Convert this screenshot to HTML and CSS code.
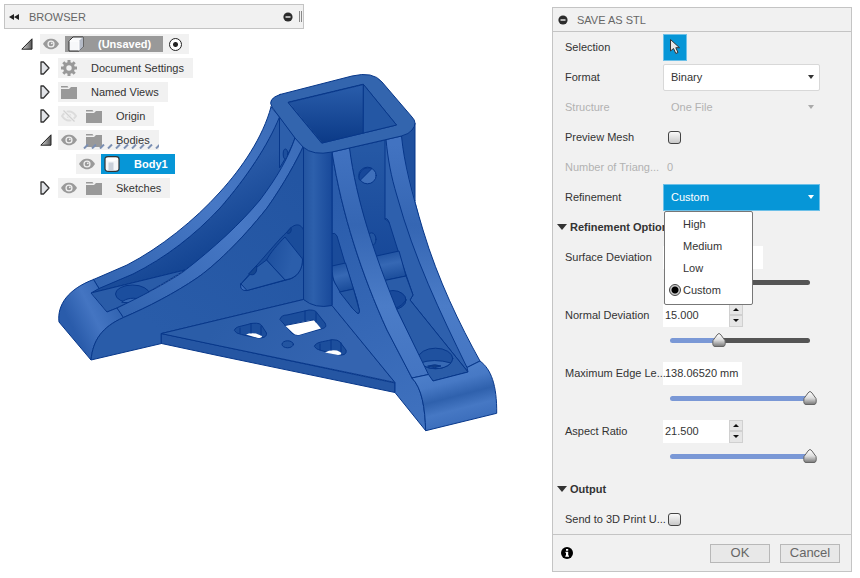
FILE: index.html
```html
<!DOCTYPE html>
<html lang="en">
<head>
<meta charset="utf-8">
<title>Save As STL</title>
<link rel="stylesheet" href="styles.css">
</head>
<body>
<svg class="defs" width="0" height="0" aria-hidden="true">
  <symbol id="eye" viewBox="0 0 16 12">
    <path d="M0 6C2.500 2 5 .8 8 .8S13.500 2 16 6C13.500 10 11 11.200 8 11.200S2.500 10 0 6Z" fill="#9a9a9a"/>
    <circle cx="8" cy="6" r="3.600" fill="#f1f1f1"/><circle cx="8" cy="6" r="2.300" fill="#9a9a9a"/>
    <circle cx="8.800" cy="5.300" r=".9" fill="#f1f1f1"/>
  </symbol>
  <symbol id="eye-off" viewBox="0 0 16 12">
    <path d="M1 6C3 3 5.500 1.500 8 1.500S13 3 15 6C13 9 10.500 10.500 8 10.500S3 9 1 6Z" fill="none" stroke="#dcdcdc" stroke-width="2"/>
    <circle cx="8" cy="6" r="2.300" fill="#dcdcdc"/>
    <path d="M2 0L14 12" stroke="#f1f1f1" stroke-width="3"/><path d="M2.500 .5L13.500 11.500" stroke="#d2d2d2" stroke-width="1.300"/>
  </symbol>
  <symbol id="folder" viewBox="0 0 16 13">
    <path d="M0 0H6.500L7.500 1.500H0ZM0 3H8L10 1H16V13H0Z" fill="#999"/>
  </symbol>
  <symbol id="closed" viewBox="0 0 10 14">
    <path d="M1 1H3.500L9 7L3.500 13H1Z" fill="#e2e4e8" stroke="#333" stroke-width="1.300" stroke-linejoin="round"/>
  </symbol>
  <symbol id="open" viewBox="0 0 12 12">
    <path d="M11 .8V11.200H.8Z" fill="url(#tri)" stroke="#222"/>
  </symbol>
  <symbol id="minus" viewBox="0 0 10 10">
    <circle cx="5" cy="5" r="4.600" fill="#2b2b2b"/><path d="M2.500 5H7.500" stroke="#f1f1f1" stroke-width="1.400"/>
  </symbol>
  <linearGradient id="tri" x1="0" x2="1"><stop offset="0" stop-color="#ddd"/><stop offset="1" stop-color="#555"/></linearGradient>
</svg>

<svg class="model" viewBox="55 70 446 366" role="img" aria-label="Post base bracket">
  <defs>
    <linearGradient id="toe" gradientUnits="userSpaceOnUse" x1="64" y1="310" x2="112" y2="286">
      <stop offset="0" stop-color="#2a5cab"/><stop offset=".45" stop-color="#4475c2"/><stop offset="1" stop-color="#2f61ae"/>
    </linearGradient>
    <linearGradient id="toe2" gradientUnits="userSpaceOnUse" x1="445" y1="368" x2="460" y2="426">
      <stop offset="0" stop-color="#4d7fca"/><stop offset=".25" stop-color="#4779c5"/><stop offset=".5" stop-color="#2f61ad"/><stop offset=".72" stop-color="#4678c4"/><stop offset="1" stop-color="#3a6cba"/>
    </linearGradient>
    <linearGradient id="strip" gradientUnits="userSpaceOnUse" x1="280" y1="130" x2="110" y2="310">
      <stop offset="0" stop-color="#3c6db9"/><stop offset=".4" stop-color="#4778c5"/><stop offset="1" stop-color="#3163af"/>
    </linearGradient>
    <linearGradient id="stripv" gradientUnits="userSpaceOnUse" x1="0" y1="145" x2="0" y2="375">
      <stop offset="0" stop-color="#4273c1"/><stop offset=".35" stop-color="#3566b3"/><stop offset=".7" stop-color="#4b7cc7"/><stop offset="1" stop-color="#4475c2"/>
    </linearGradient>
    <linearGradient id="post" x1="0" x2="1">
      <stop offset="0" stop-color="#2354a0"/><stop offset=".35" stop-color="#2d60ac"/><stop offset="1" stop-color="#18499a"/>
    </linearGradient>
    <linearGradient id="well" x1="0" y1="0" x2="0" y2="1">
      <stop offset="0" stop-color="#2a5dab"/><stop offset="1" stop-color="#0b3a87"/>
    </linearGradient>
    <linearGradient id="wall" gradientUnits="userSpaceOnUse" x1="220" y1="180" x2="250" y2="235">
      <stop offset="0" stop-color="#2859a6"/><stop offset="1" stop-color="#134492"/>
    </linearGradient>
    <linearGradient id="side" gradientUnits="userSpaceOnUse" x1="300" y1="180" x2="170" y2="340">
      <stop offset="0" stop-color="#2355a2"/><stop offset="1" stop-color="#295ca9"/>
    </linearGradient>
    <linearGradient id="inner" gradientUnits="userSpaceOnUse" x1="0" y1="150" x2="0" y2="260">
      <stop offset="0" stop-color="#2558a5"/><stop offset="1" stop-color="#174899"/>
    </linearGradient>
    <linearGradient id="arm" gradientUnits="userSpaceOnUse" x1="335" y1="200" x2="420" y2="420">
      <stop offset="0" stop-color="#2a5cab"/><stop offset="1" stop-color="#3f71be"/>
    </linearGradient>
    <linearGradient id="band" x1="0" y1="0" x2=".2" y2="1">
      <stop offset="0" stop-color="#1b4d9c"/><stop offset=".5" stop-color="#3668b4"/><stop offset="1" stop-color="#1c4e9c"/>
    </linearGradient>
    <linearGradient id="bore" x1="0" y1="0" x2="1" y2=".3">
      <stop offset="0" stop-color="#1b4d9c"/><stop offset=".8" stop-color="#2b5eab"/>
    </linearGradient>
    <linearGradient id="plate" gradientUnits="userSpaceOnUse" x1="240" y1="300" x2="320" y2="370">
      <stop offset="0" stop-color="#2b5da8"/><stop offset="1" stop-color="#3464b0"/>
    </linearGradient>
  </defs>
  <g stroke="#07378a" stroke-width="1" stroke-linejoin="round" stroke-linecap="round">
    <!-- far wall of the left arm -->
    <path fill="url(#wall)" d="M279 117C268 145 247 177 220 208C195 235 165 258 133 274L99 288L91 293L185 270C230 240 280 190 295 138Z"/>
    <path fill="#2d5fab" d="M279.500 117V168C287 156 292 147 295 138Z"/>
    <ellipse cx="285.500" cy="154" rx="2.300" ry="5" fill="#1d4f9d"/>
    <!-- left arm floor -->
    <path fill="#2a5ca8" d="M91 293L185 270C165 283 140 297 117 308L107 312Z"/>
    <ellipse cx="132.500" cy="294" rx="17" ry="9" fill="#1b4e9e"/>
    <path fill="#3466b2" d="M122 302C126 298 134 297 143 300L132 303Z"/>
    <!-- left arm top strips and toe -->
    <path fill="url(#strip)" d="M271 107L279.500 117C268 145 247 177 220 208C195 235 165 258 133 274L99 288.500L93.500 279.500L127 265C160 248 195 220 220 192C242 168 263 137 271 107Z"/>
    <path fill="url(#toe)" d="M93.500 279.500L99 288.500L91 293L107 312L117 308L123.500 317.500C102 327 93 340 91 360L59 322C57 305 68 289 93.500 279.500Z"/>
    <path fill="url(#strip)" d="M295 138L303.500 146C297 160 284 184 267 208C240 242 213 267 197 278C175 293 148 307 123.500 317.500L117 308C140 297 165 284 183 272C215 247 240 224 260 200C278 176 288 158 295 138Z"/>
    <!-- left arm near side -->
    <path fill="url(#side)" d="M303.500 146V299.500L161.500 333.500V343.500L91 360C93 340 102 327 123.500 317.500C148 307 175 293 197 278C213 267 240 242 267 208C284 184 297 160 303.500 146Z"/>
    <path fill="#1a4c9a" d="M241 284L257 265C267 254 280 238 287 232C293 224 300 222 303.500 230V256C302 270 298 276 290 279L247 290.500C241 290 240 287 241 284Z"/>
    <path fill="url(#bore)" d="M266.500 260L285 280L291 278.500C299 275 302.500 268 302.500 259L285 237C278 244 270 253 266.500 260Z"/>
    <path fill="#2a5da9" d="M241 284L257 267L266.500 260L285 280L247 290.500Z"/>
    <path fill="#14458f" d="M249 274C254 277 258 272 256.500 266ZM287 233C290 235 292 231 291 228Z"/>
    <path fill="#3b6dba" d="M241 284L247 290.500C241 291 240 287 241 284Z"/>
    <!-- base plate -->
    <path fill="#2556a3" d="M161.500 333.500L395 383V392.500L220 356L161.500 343.500Z"/>
    <path fill="url(#plate)" d="M161.500 333.500L303.500 299.500L332 305.500L395 382.500L360 375L220 346Z"/>
    <path fill="#1c4e9c" d="M280 319C281 316 284 315 287 315L309 310C314 310 316 311 317 313L325 323C327 327 325 328 321 329L299 335C294 335 292 334 290 331Z"/>
    <path fill="#fff" stroke="none" d="M285 325.500L311 320Q314 319.500 315.500 322L321 328.500L299 335Q295 335.500 293 333Z"/>
    <path fill="none" d="M285 325.500L313 320M305 311V321M316 312V322"/>
    <path fill="#1c4e9c" d="M234.500 330C236 326 240 327 251 323.500C257 323 260 323 262 326L266.500 333C267 337 263 338 259 338C252 337 242 335 237 333Z"/>
    <path fill="#fff" stroke="none" d="M246 334.500Q250 332.500 256 333.500L262 336Q262 338 258 338Z"/>
    <path fill="none" d="M240 328V333M251 323.500V333M261 326V335"/>
    <path fill="#1c4e9c" d="M314.500 346C316 342 322 342 332 339.700Q338 339.500 340 342L346 350C347 354 344 355 340 355C330 353 322 351 317 349Z"/>
    <path fill="#fff" stroke="none" d="M325 352.500Q330 349.500 337 350.500L341 352.500Q342 355 338 355Z"/>
    <path fill="none" d="M320 344V350M331 340V350M341 343V352"/>
    <ellipse cx="287.700" cy="344.300" rx="5.700" ry="3.500" fill="#2355a1"/>
    <!-- outer column of the post -->
    <path fill="#1f509e" d="M400 136L415 123V201L408 190Z"/>
    <!-- right arm outer wall -->
    <path fill="#2e60ad" stroke="none" d="M385 140H400L425 240L474 366L467.500 371L433 380L384 225Z"/>
    <!-- post face between the arm's strips -->
    <path fill="url(#inner)" d="M349 148L385 140V219L389 222L400 257L413 295L410 300L468 372L433 381L428 375L397 310C380 270 360 220 349 148Z"/>
    <path fill="none" d="M385 219Q387 217 389 222"/>
    <path fill="url(#band)" d="M376.500 256L399 251L406 276L384.500 280.500Z"/>
    <ellipse cx="367.500" cy="175.500" rx="8.700" ry="8.300" fill="#3f70bb"/>
    <path fill="#17489a" d="M359 179C358 170 366 166 372 168.500L360.500 180Z"/>
    <ellipse cx="371.500" cy="239.300" rx="4.500" ry="6.500" fill="#2355a1"/>
    <path fill="#2a5ca8" d="M384.500 280.500L406 276L413 295L410 300L468 372L433 381L428 375L397 310Z"/>
    <ellipse cx="393" cy="300" rx="13" ry="9.500" fill="#18499a"/>
    <path fill="none" d="M396 308Q402 306 406 300"/>
    <ellipse cx="435.500" cy="358.500" rx="17.300" ry="10.300" fill="#1f519f"/>
    <path fill="#3769b4" d="M420 363Q434 358 451 363Q445 369 435 368.500Q425 368 420 363Z"/>
    <path fill="#123f88" d="M428 366Q435 363.500 441 366L435 367.500Z"/>
    <path fill="url(#stripv)" d="M386 139.500L401.500 136C404 163 412 193 423 230C438 280 460 325 480 361L467 367.500C440 312 414 258 397 196C391 176 388 160 386 139.500Z"/>
    <!-- right arm near side -->
    <path fill="url(#arm)" d="M332 152V305.500L395 382.500V392.500L425.700 430.700C425 408 422 388 412 378L387 330C362 275 342 215 332 152Z"/>
    <path fill="#1a4b9a" d="M332 233.500Q335 232 337 236L345 263L357 300L359.500 311Q359 315 357 313L353 309L335 283Q332 278 332 272Z"/>
    <path fill="url(#band)" d="M332 266L345.500 263L353.500 289L340 292L335 283Q332 278 332 266Z"/>
    <path fill="#2456a3" d="M340 292L353.500 289L359.500 311Q359 315 357 313L353 309Z"/>
    <path fill="url(#stripv)" d="M332 152L349.500 148C356 200 375 256 397 310L428.500 374.500L412 378L387 330C362 275 342 215 332 152Z"/>
    <path fill="url(#toe2)" d="M412 378L428.500 374.500L433 381L468 372L467 367.500L480 361C491 369 497 385 496.700 413.300L425.700 430.700C425 408 422 388 412 378Z"/>
    <!-- post corner and top ring -->
    <path fill="url(#post)" d="M303.500 146V299.500Q315 309 332 305.500V152Z"/>
    <path fill="#3365ae" fill-rule="evenodd" d="M280 94.500L352 76Q373 71 382 82L412 117Q418 123 412 130Q409 134 401.500 136L332 152Q313 156 303 147L295 138L272 107Q267 99 280 94.500ZM288.500 102.500L322 143L396.500 125L363.500 84.500Z"/>
    <path fill="url(#well)" d="M288.500 102.500L363.500 84.500V133L322 143Z"/>
    <path fill="#2457a4" d="M363.500 84.500L396.500 125L363.500 133Z"/>
  </g>
</svg>

<main class="workspace">
  <aside class="browser">
    <header class="browser-bar">
      <svg class="rewind" viewBox="0 0 10 6" aria-hidden="true"><path d="M5 0V6L0 3ZM10 0V6L5 3Z" fill="#222"/></svg>
      <h2>BROWSER</h2>
      <svg class="i10" aria-hidden="true"><use href="#minus"/></svg>
      <i class="grip"></i>
    </header>
    <ul class="tree">
      <li class="root"><button class="toggle" aria-label="Collapse"><svg class="i12"><use href="#open"/></svg></button>
        <div class="chip"><svg class="eye"><use href="#eye"/></svg><span class="tag doc"><svg class="i16" viewBox="0 0 16 16"><path d="M1 5L5 1H15V11L11 15H1Z" fill="#f7f8fa" stroke="#333" stroke-linejoin="round"/><path d="M11 5L15 1V11L11 15Z" fill="#b4bac6"/><path d="M1.500 5H11V14.500" fill="none" stroke="#fff"/></svg>(Unsaved)</span><input class="activate" type="radio" name="active" checked aria-label="Activate component"></div></li>
      <li><button class="toggle" aria-label="Expand"><svg class="tri"><use href="#closed"/></svg></button>
        <div class="chip"><svg class="i16" viewBox="0 0 16 16"><circle cx="8" cy="8" r="4.300" fill="none" stroke="#999" stroke-width="3.200"/><path d="M8 0V3M8 13V16M0 8H3M13 8H16M2.300 2.300L4.500 4.500M11.500 11.500L13.700 13.700M2.300 13.700L4.500 11.500M11.500 4.500L13.700 2.300" stroke="#999" stroke-width="3"/></svg><span>Document Settings</span></div></li>
      <li><button class="toggle" aria-label="Expand"><svg class="tri"><use href="#closed"/></svg></button>
        <div class="chip"><svg class="folder"><use href="#folder"/></svg><span>Named Views</span></div></li>
      <li><button class="toggle" aria-label="Expand"><svg class="tri"><use href="#closed"/></svg></button>
        <div class="chip"><svg class="eye"><use href="#eye-off"/></svg><svg class="folder"><use href="#folder"/></svg><span>Origin</span></div></li>
      <li><button class="toggle" aria-label="Collapse"><svg class="i12"><use href="#open"/></svg></button>
        <div class="chip hatched"><svg class="eye"><use href="#eye"/></svg><svg class="folder"><use href="#folder"/></svg><span>Bodies</span></div></li>
      <li class="leaf">
        <div class="chip"><svg class="eye"><use href="#eye"/></svg><span class="tag body"><svg class="i16" viewBox="0 0 16 16"><path d="M1 3Q1 .7 4 .7H12Q15 .7 15 3V12.500Q15 15.300 11.500 15.300H4.500Q1 15.300 1 12.500Z" fill="#f4f6f8" stroke="#333" stroke-width="1.200"/><path d="M4.500 6.500H9.500V14.500H4.500Z" fill="#c9d0da"/><path d="M2 3.500Q8 7 14 3.500V2H2Z" fill="#fff"/></svg>Body1</span></div></li>
      <li><button class="toggle" aria-label="Expand"><svg class="tri"><use href="#closed"/></svg></button>
        <div class="chip"><svg class="eye"><use href="#eye"/></svg><svg class="folder"><use href="#folder"/></svg><span>Sketches</span></div></li>
    </ul>
  </aside>

  <form class="dialog">
    <header class="dialog-bar">
      <svg class="i10" aria-hidden="true"><use href="#minus"/></svg>
      <h2>SAVE AS STL</h2>
    </header>
    <div class="rows">
      <div class="row"><label for="pick">Selection</label>
        <button class="pick" type="button" id="pick" aria-label="Select body"><svg viewBox="0 0 12 18"><path d="M1.500 1.500V13L4.500 10.500L6.800 15.500L9 14.500L6.800 9.700H10.500Z" fill="#e8e8e8" stroke="#333" stroke-linejoin="round"/></svg></button></div>
      <div class="row"><label for="format">Format</label>
        <select id="format"><option>Binary</option><option>ASCII</option></select></div>
      <div class="row off"><label for="structure">Structure</label>
        <select id="structure" disabled><option>One File</option></select></div>
      <div class="row"><label for="preview">Preview Mesh</label><input type="checkbox" id="preview"></div>
      <div class="row off"><label for="count">Number of Triang...</label><output id="count">0</output></div>
      <div class="row"><label for="refine">Refinement</label>
        <div class="combo">
          <select id="refine" class="active"><option>Custom</option><option>High</option><option>Medium</option><option>Low</option></select>
          <div class="menu">
            <label><input type="radio" name="level">High</label>
            <label><input type="radio" name="level">Medium</label>
            <label><input type="radio" name="level">Low</label>
            <label><input type="radio" name="level" checked>Custom</label>
          </div>
        </div></div>
      <h3>Refinement Options</h3>
      <div class="row"><label for="surface">Surface Deviation</label><input class="long" type="text" id="surface"></div>
      <div class="slider" style="--fill:10%"><input type="range" value="10" aria-label="Surface deviation"></div>
      <div class="row"><label for="normal">Normal Deviation</label>
        <div class="spin"><input type="text" id="normal" value="15.000"><button type="button" aria-label="Increase"></button><button type="button" class="down" aria-label="Decrease"></button></div></div>
      <div class="slider" style="--fill:35%"><input type="range" value="35" aria-label="Normal deviation"></div>
      <div class="row"><label for="edge">Maximum Edge Le...</label><input type="text" class="medium" id="edge" value="138.06520 mm"></div>
      <div class="slider" style="--fill:100%"><input type="range" value="100" aria-label="Maximum edge length"></div>
      <div class="row"><label for="aspect">Aspect Ratio</label>
        <div class="spin"><input type="text" id="aspect" value="21.500"><button type="button" aria-label="Increase"></button><button type="button" class="down" aria-label="Decrease"></button></div></div>
      <div class="slider" style="--fill:100%"><input type="range" value="100" aria-label="Aspect ratio"></div>
      <h3>Output</h3>
      <div class="row"><label for="send">Send to 3D Print U...</label><input type="checkbox" id="send"></div>
    </div>
    <footer>
      <svg class="i12" viewBox="0 0 12 12" aria-hidden="true"><circle cx="6" cy="6" r="6"/><path d="M5 2H7.200V3.800H5ZM4.500 4.800H7.200V8.500H8V9.800H4.300V8.500H5V6H4.500Z" fill="#fff"/></svg>
      <button type="button">OK</button><button type="button">Cancel</button>
    </footer>
  </form>
</main>
</body>
</html>
```
FILE: styles.css
```css
* { box-sizing: border-box; }
body {
  margin: 0;
  position: relative;
  min-height: 100vh;
  background: #fff;
  color: #333;
  font: 11px/14px "Liberation Sans", Arial, sans-serif;
}
button, input, select { font: inherit; color: inherit; margin: 0; }
h2, h3, ul { margin: 0; padding: 0; font-size: inherit; }
svg { display: block; flex: none; }
.defs { position: absolute; }
.model { position: absolute; left: 55px; top: 70px; width: 446px; }
.i10 { width: 10px; height: 10px; }
.i12 { width: 12px; height: 12px; }
.i16 { width: 16px; height: 16px; }

.workspace {
  position: relative;
  display: flex;
  justify-content: space-between;
  align-items: flex-start;
  padding: 4px 8px 4px 4px;
}

/* Browser panel */
.browser { width: 300px; }
.browser-bar {
  display: flex;
  align-items: center;
  height: 25px;
  padding: 0 1px 0 4px;
  border: 1px solid #c4c4c4;
  background: #f1f1f1;
}
h2 { flex: 1; font-weight: normal; color: #666; }
.rewind { width: 10px; height: 6px; margin-right: 10px; }
.grip { width: 3px; height: 11px; margin-left: 6px; border: solid #888; border-width: 0 1px; }
.tree { list-style: none; margin-top: 3px; }
.tree li { display: flex; align-items: center; height: 24px; padding-left: 36px; }
.tree .root { padding-left: 17px; }
.tree .leaf { padding-left: 72px; }
.toggle { width: 18px; height: 14px; padding: 0; border: 0; background: none; }
.root .toggle { width: 19px; }
.tri { width: 10px; height: 14px; }
.chip {
  position: relative;
  display: flex;
  align-items: center;
  gap: 9px;
  height: 20px;
  padding: 0 9px 0 3px;
  background: #f1f1f1;
}
.chip span:not(.tag) { margin-left: 5px; }
.eye { width: 16px; height: 12px; }
.folder { width: 16px; height: 13px; }
.tag {
  display: flex;
  align-items: center;
  gap: 14px;
  height: 20px;
  padding: 0 7px 0 3px;
  color: #fff;
  font-weight: bold;
}
.doc { height: 16px; padding-right: 12px; background: #999; }
.root .chip { gap: 6px; padding-right: 7px; }
.leaf .chip { gap: 6px; padding-right: 0; }
.body { background: #0696d7; }
.activate {
  appearance: none;
  width: 13px;
  height: 13px;
  border: 1px solid #222;
  border-radius: 50%;
  background: radial-gradient(#222 0 2px, #fff 3px);
}
.hatched::after {
  content: "";
  position: absolute;
  left: 25px;
  right: 0;
  bottom: 1px;
  height: 5px;
  background: url("data:image/svg+xml,%3Csvg xmlns='http://www.w3.org/2000/svg' width='8' height='5'%3E%3Cpath d='M1 4.500L5 .5' stroke='%237b8fb3' stroke-width='2'/%3E%3C/svg%3E");
}

/* Dialog */
.dialog {
  width: 300px;
  margin-top: 3px;
  border: 1px solid #c4c4c4;
  background: #f1f1f1;
}
.dialog-bar {
  display: flex;
  align-items: center;
  gap: 9px;
  height: 24px;
  padding: 0 5px;
  border-bottom: 1px solid #c4c4c4;
}
.row {
  display: grid;
  grid-template-columns: 94px 1fr;
  column-gap: 4px;
  align-items: center;
  justify-items: start;
  height: 30px;
  padding: 0 31px 0 12px;
}
/* Long labels stay readable where they meet the field */
.row > label { z-index: 1; white-space: nowrap; }
.off { color: #b2b2b2; }
.off output { padding-left: 4px; }
h3 { display: flex; align-items: center; gap: 3px; height: 30px; padding-left: 4px; font-weight: bold; }
h3::before { content: ""; border: solid transparent; border-width: 6px 5px 0; border-top-color: #333; }
.pick {
  display: grid;
  place-items: center;
  width: 24px;
  height: 27px;
  padding: 0;
  border: 1px solid #6cc0e8;
  background: #0696d7;
}
.pick svg { width: 12px; height: 18px; }
select {
  appearance: none;
  width: 100%;
  height: 27px;
  padding: 0 8px 0 7px;
  border: 1px solid #d8d8d8;
  border-radius: 2px;
  background: #fff url("data:image/svg+xml,%3Csvg xmlns='http://www.w3.org/2000/svg' width='6' height='4'%3E%3Cpath d='M0 0H6L3 4Z' fill='%23333'/%3E%3C/svg%3E") no-repeat right 5px center;
}
select:disabled {
  border-color: transparent;
  color: #b2b2b2;
  opacity: 1;
  background: url("data:image/svg+xml,%3Csvg xmlns='http://www.w3.org/2000/svg' width='6' height='4'%3E%3Cpath d='M0 0H6L3 4Z' fill='%23aaa'/%3E%3C/svg%3E") no-repeat right 5px center;
}
select.active {
  border-color: #6cc0e8;
  border-radius: 0;
  color: #fff;
  background-color: #0696d7;
  background-image: url("data:image/svg+xml,%3Csvg xmlns='http://www.w3.org/2000/svg' width='6' height='4'%3E%3Cpath d='M0 0H6L3 4Z' fill='%23fff'/%3E%3C/svg%3E");
}
.combo { position: relative; width: 100%; }
.menu {
  position: absolute;
  z-index: 2;
  top: 100%;
  left: 1px;
  width: 89px;
  padding: 1px 4px 3px;
  border: 1px solid #777;
  border-radius: 2px;
  background: #fff;
}
.menu label { display: flex; align-items: center; gap: 2px; height: 22px; }
.menu input { appearance: none; width: 12px; height: 12px; border-radius: 50%; }
.menu input:checked { border: 1px solid #444; background: radial-gradient(#000 0 3px, #ccc 4px); }
input[type="checkbox"] {
  appearance: none;
  width: 13px;
  height: 13px;
  margin-left: 5px;
  border: 1px solid #444;
  border-radius: 3px;
  background: linear-gradient(#fafafa, #c8c8c8);
}
input[type="text"] { width: 66px; height: 23px; padding: 0 2px; border: 0; background: #fff; }
input.medium { width: 79px; }
input.long { width: 100px; }
.spin { display: grid; grid-template-columns: 66px 14px; }
.spin input { grid-row: span 2; }
.spin button {
  display: grid;
  place-items: center;
  padding: 0;
  border: 1px solid #d0d0d0;
  background: #e6e6e6;
}
.spin button::before { content: ""; border: solid transparent; border-width: 0 3px 3px; border-bottom-color: #111; }
.spin .down::before { transform: rotate(180deg); }
.slider { display: grid; align-items: center; height: 20px; margin: 0 34px 8px 110px; }
.slider::before {
  content: "";
  grid-area: 1 / 1;
  height: 5px;
  margin: 0 7px;
  border-radius: 3px;
  background: linear-gradient(to right, #7a98d6 var(--fill), #555 var(--fill));
}
.slider input { appearance: none; grid-area: 1 / 1; width: 100%; height: 14px; background: none; }
.slider input::-webkit-slider-thumb {
  appearance: none;
  width: 14px;
  height: 14px;
  background: url("data:image/svg+xml,%3Csvg xmlns='http://www.w3.org/2000/svg' width='14' height='14'%3E%3ClinearGradient id='g' x2='0' y2='1'%3E%3Cstop stop-color='%23fff'/%3E%3Cstop offset='.5' stop-color='%23ddd'/%3E%3Cstop offset='1' stop-color='%23777'/%3E%3C/linearGradient%3E%3Cpath d='M7 .6Q8 .6 9 2L13 7.500Q14 13.500 11 13.500H3Q0 13.500 1 7.500L5 2Q6 .6 7 .6Z' fill='url(%23g)' stroke='%23666'/%3E%3C/svg%3E");
}
footer {
  display: flex;
  align-items: center;
  gap: 10px;
  height: 37px;
  padding: 0 11px 0 8px;
  border-top: 1px solid #c4c4c4;
}
footer svg { margin-right: auto; }
footer button {
  width: 60px;
  height: 19px;
  padding: 0;
  border: 1px solid #b8b8b8;
  background: #e8e8e8;
  color: #666;
  font-size: 13px;
}
```
